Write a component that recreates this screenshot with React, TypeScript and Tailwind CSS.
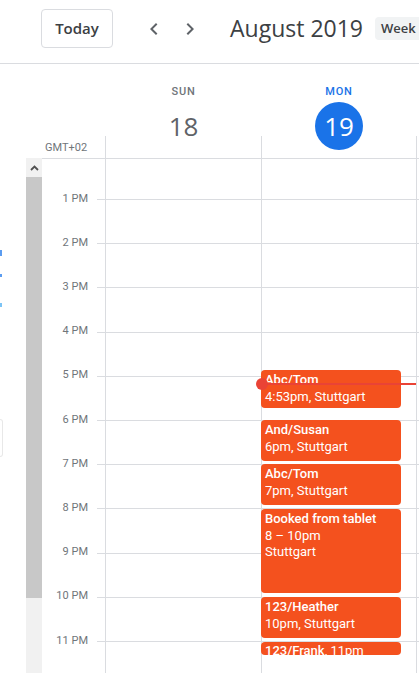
import React from "react";

const hours = ["1 PM", "2 PM", "3 PM", "4 PM", "5 PM", "6 PM", "7 PM", "8 PM", "9 PM", "10 PM", "11 PM"];

function Rows() {
  return (
    <>
      <div className="h-[41px] shrink-0 border-b border-[#dadce0]" />
      {hours.map((h) => (
        <div key={h} className="h-[44.2px] shrink-0 border-b border-[#dadce0]" />
      ))}
      <div className="h-[44.2px] shrink-0" />
    </>
  );
}

type Ev = { top: number; h: number; title: string; sub?: string[]; inline?: string };

const events: Ev[] = [
  { top: 211, h: 38, title: "Abc/Tom", sub: ["4:53pm, Stuttgart"] },
  { top: 261, h: 41, title: "And/Susan", sub: ["6pm, Stuttgart"] },
  { top: 305, h: 41, title: "Abc/Tom", sub: ["7pm, Stuttgart"] },
  { top: 350, h: 84, title: "Booked from tablet", sub: ["8 – 10pm", "Stuttgart"] },
  { top: 438, h: 41, title: "123/Heather", sub: ["10pm, Stuttgart"] },
  { top: 483, h: 13, title: "123/Frank", inline: ", 11pm" },
];

function Chevron({ dir }: { dir: "left" | "right" }) {
  return (
    <svg width="24" height="24" viewBox="0 0 24 24" fill="#5f6368">
      {dir === "left" ? (
        <path d="M15.41 7.41L14 6l-6 6 6 6 1.41-1.41L10.83 12z" />
      ) : (
        <path d="M8.59 16.59L10 18l6-6-6-6-1.41 1.41L13.17 12z" />
      )}
    </svg>
  );
}

export default function App() {
  return (
    <div
      className="w-[419px] h-[673px] overflow-hidden bg-white flex flex-col"
      style={{ fontFamily: "Roboto, 'Noto Sans', sans-serif" }}
    >
      {/* Top bar */}
      <div
        className="h-[64px] shrink-0 border-b border-[#dadce0] flex items-center pb-[6px] pl-[41px] whitespace-nowrap overflow-hidden"
        style={{ fontFamily: "'Open Sans', Roboto, sans-serif" }}
      >
        <button className="w-[72px] h-[39px] shrink-0 border border-[#dadce0] rounded-[4px] text-[15px] font-semibold text-[#3c4043] flex items-center justify-center">
          Today
        </button>
        <div className="ml-[23px] w-[36px] h-[36px] shrink-0 flex items-center justify-center">
          <Chevron dir="left" />
        </div>
        <div className="w-[36px] h-[36px] shrink-0 flex items-center justify-center">
          <Chevron dir="right" />
        </div>
        <div className="ml-[22px] text-[23px] text-[#3c4043] leading-none shrink-0">August 2019</div>
        <div className="ml-[12px] h-[23px] pl-[6px] pr-[8px] rounded-[4px] bg-[#f1f3f4] text-[13px] font-semibold text-[#3c4043] flex items-center shrink-0">
          Week
        </div>
      </div>

      {/* Body */}
      <div className="flex flex-1 min-h-0">
        {/* clipped sidebar */}
        <div className="w-[26px] shrink-0 flex flex-col pt-[186px]">
          <div className="w-[2px] h-[6px] bg-[#5b9cf0]" />
          <div className="mt-[18px] w-[2px] h-[3px] bg-[#5b9cf0]" />
          <div className="mt-[26px] w-[2px] h-[4px] bg-[#7cc4f5]" />
          <div className="mt-[112px] w-[3px] h-[38px] border-y border-r border-[#e8e8e8] rounded-r-[3px]" />
        </div>

        {/* scrollbar */}
        <div className="w-[16px] shrink-0 flex flex-col pt-[94px]">
          <div className="flex-1 bg-[#f1f1f1] flex flex-col">
            <div className="h-[19px] flex items-center justify-center">
              <svg width="9" height="6" viewBox="0 0 9 6">
                <path d="M1 5 L4.5 1.5 L8 5" stroke="#505050" strokeWidth="1.8" fill="none" />
              </svg>
            </div>
            <div className="h-[421px] bg-[#c8c8c8]" />
          </div>
        </div>

        {/* main calendar */}
        <div className="flex-1 flex flex-col min-w-0">
          {/* day header */}
          <div className="h-[95px] shrink-0 border-b border-[#dadce0] flex">
            <div className="w-[63px] shrink-0 flex flex-col justify-end pl-[3px] pb-[4px]">
              <div className="text-[11px] leading-[13px] text-[#70757a]">GMT+02</div>
            </div>
            <div className="w-[156px] shrink-0 flex items-end">
              <div className="w-px h-[22px] bg-[#dadce0]" />
              <div className="flex-1 flex flex-col items-center pt-[21px]">
                <div className="text-[11px] leading-[14px] font-medium tracking-[0.8px] text-[#70757a]">SUN</div>
                <div
                  className="mt-[3px] w-[48px] h-[48px] flex items-center justify-center text-[26px] text-[#5f6368]"
                  style={{ fontFamily: "'Open Sans', Roboto, sans-serif" }}
                >
                  18
                </div>
                <div className="h-[8px]" />
              </div>
            </div>
            <div className="w-[155px] shrink-0 flex items-end">
              <div className="w-px h-[22px] bg-[#dadce0]" />
              <div className="flex-1 flex flex-col items-center pt-[21px]">
                <div className="text-[11px] leading-[14px] font-medium tracking-[0.8px] text-[#1a73e8]">MON</div>
                <div
                  className="mt-[3px] w-[48px] h-[48px] rounded-full bg-[#1a73e8] flex items-center justify-center text-[26px] text-white"
                  style={{ fontFamily: "'Open Sans', Roboto, sans-serif" }}
                >
                  19
                </div>
                <div className="h-[8px]" />
              </div>
            </div>
            <div className="flex-1 flex items-end">
              <div className="w-px h-[22px] bg-[#dadce0]" />
            </div>
          </div>

          {/* grid */}
          <div className="flex flex-1 min-h-0 overflow-hidden">
            <div className="w-[55px] shrink-0 flex flex-col pt-[17.9px]">
              {hours.map((h) => (
                <div
                  key={h}
                  className="h-[44.2px] shrink-0 flex items-center justify-end pr-[9px] text-[11px] text-[#70757a]"
                >
                  {h}
                </div>
              ))}
            </div>
            <div className="w-[8px] shrink-0 flex flex-col">
              <Rows />
            </div>
            <div className="w-[156px] shrink-0 border-l border-[#dadce0] flex flex-col">
              <Rows />
            </div>
            <div className="w-[155px] shrink-0 border-l border-[#dadce0] flex flex-col relative">
              <Rows />
              {events.map((e, i) => (
                <div
                  key={i}
                  className={
                    e.inline
                      ? "absolute left-[-1px] w-[140px] rounded-[4px] bg-[#f4511e] text-white text-[13px] leading-[16px] pl-[4px] pt-[1px] whitespace-nowrap"
                      : "absolute left-[-1px] w-[140px] rounded-[4px] bg-[#f4511e] text-white text-[13px] leading-[16.5px] pl-[4px] pt-[2px] overflow-hidden whitespace-nowrap"
                  }
                  style={{ top: e.top, height: e.h }}
                >
                  {e.inline ? (
                    <div>
                      <span className="font-medium">{e.title}</span>
                      {e.inline}
                    </div>
                  ) : (
                    <>
                      <div className="font-medium">{e.title}</div>
                      {e.sub?.map((s) => (
                        <div key={s}>{s}</div>
                      ))}
                    </>
                  )}
                </div>
              ))}
              <div className="absolute left-0 right-0 top-[224px] h-[2px] bg-[#ea4335]" />
              <div className="absolute left-[-6px] top-[219px] w-[12px] h-[12px] rounded-full bg-[#ea4335]" />
            </div>
            <div className="flex-1 border-l border-[#dadce0] flex flex-col">
              <Rows />
            </div>
          </div>
        </div>
      </div>
    </div>
  );
}
